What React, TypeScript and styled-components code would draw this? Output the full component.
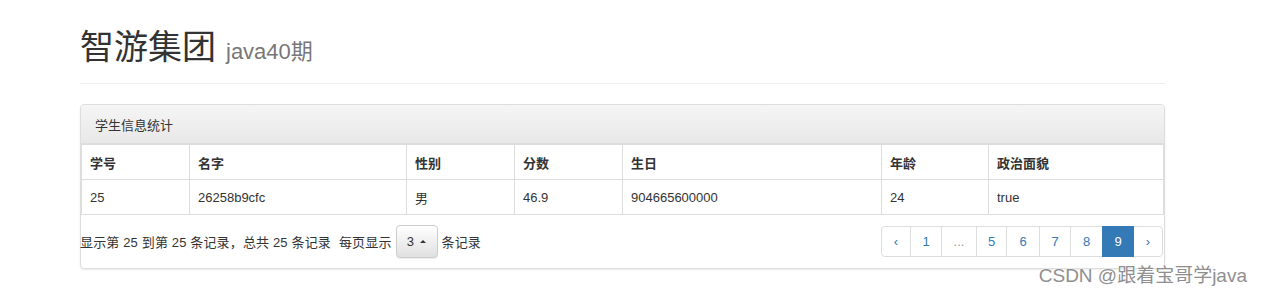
import React from 'react';
import styled, { createGlobalStyle } from 'styled-components';

const GlobalStyles = createGlobalStyle`
  html, body {
    margin: 0;
    padding: 0;
    background: #ffffff;
  }
  body {
    font-family: "Liberation Sans", "Noto Sans CJK SC", sans-serif;
    color: #333333;
    font-size: 13px;
  }
`;

const Page = styled.div`
  position: relative;
  width: 1261px;
  height: 293px;
  padding: 0 0 0 80px;
  box-sizing: border-box;
`;

const Header = styled.div`
  width: 1085px;
  padding-top: 27px;
  padding-bottom: 11px;
  border-bottom: 1px solid #eeeeee;
  margin-bottom: 20px;
`;

const Title = styled.h1`
  margin: 0;
  font-size: 34px;
  line-height: 40px;
  font-weight: 400;
  color: #333333;
`;

const SubTitle = styled.small`
  font-size: 22px;
  color: #777777;
  margin-left: 10px;
`;

const Panel = styled.div`
  width: 1085px;
  box-sizing: border-box;
  border: 1px solid #dddddd;
  border-radius: 4px;
  box-shadow: 0 1px 2px rgba(0, 0, 0, 0.08);
  background: #ffffff;
`;

const PanelHeading = styled.div`
  height: 39px;
  box-sizing: border-box;
  padding: 0 14px;
  display: flex;
  align-items: center;
  font-size: 13px;
  color: #333333;
  background: linear-gradient(to bottom, #f5f5f5 0%, #e8e8e8 100%);
  border-bottom: 1px solid #dddddd;
  border-radius: 3px 3px 0 0;
`;

const Table = styled.table`
  width: 1082px;
  border-collapse: collapse;
  table-layout: fixed;
  border: 1px solid #dddddd;
  border-top: 0;
`;

const Cell = styled.td<{ $head?: boolean }>`
  height: 34px;
  padding: 0 8px;
  border: 1px solid #dddddd;
  font-size: 13px;
  font-weight: ${p => (p.$head ? 700 : 400)};
  color: #333333;
  vertical-align: middle;
  text-align: left;
`;

const Footer = styled.div`
  display: flex;
  align-items: center;
  justify-content: space-between;
  padding: 10px 0 10px 0;
  margin-left: -1px;
`;

const Detail = styled.div`
  display: flex;
  align-items: center;
  font-size: 13px;
  letter-spacing: 0.15px;
  color: #333333;
  white-space: pre;
`;

const PerPage = styled.span`
  margin-left: 8px;
`;

const SizeButton = styled.button`
  width: 42px;
  height: 33px;
  margin: 0 4px 0 4px;
  border: 1px solid #cccccc;
  border-radius: 4px;
  background: linear-gradient(to bottom, #ffffff 0%, #e0e0e0 100%);
  box-shadow: inset 0 1px 0 rgba(255, 255, 255, 0.15), 0 1px 1px rgba(0, 0, 0, 0.075);
  font-family: inherit;
  font-size: 13px;
  color: #333333;
  display: flex;
  align-items: center;
  justify-content: center;
  gap: 3px;
  padding: 0;
`;

const Caret = styled.span`
  width: 0;
  height: 0;
  border-left: 3px solid transparent;
  border-right: 3px solid transparent;
  border-bottom: 3px solid #333333;
`;

const Pagination = styled.ul`
  display: flex;
  list-style: none;
  margin: 0 1px 0 0;
  padding: 0;
  border-radius: 4px;
`;

const PageItem = styled.li<{ $active?: boolean; $w: number; $muted?: boolean }>`
  width: ${p => p.$w}px;
  height: 31px;
  box-sizing: border-box;
  display: flex;
  align-items: center;
  justify-content: center;
  margin-left: -1px;
  border: 1px solid ${p => (p.$active ? '#337ab7' : '#dddddd')};
  background: ${p => (p.$active ? '#337ab7' : '#ffffff')};
  color: ${p => (p.$active ? '#ffffff' : p.$muted ? '#999999' : '#337ab7')};
  font-size: 13px;
  position: relative;
  z-index: ${p => (p.$active ? 2 : 1)};
  &:first-child {
    margin-left: 0;
    border-radius: 4px 0 0 4px;
  }
  &:last-child {
    border-radius: 0 4px 4px 0;
  }
`;

const Watermark = styled.div`
  position: absolute;
  right: 14px;
  top: 260px;
  font-size: 19px;
  color: #8f8f8f;
  text-shadow: 0 0 2px #ffffff, 0 0 2px #ffffff;
`;

const columns = [
  { title: '学号', width: 108, value: '25' },
  { title: '名字', width: 217, value: '26258b9cfc' },
  { title: '性别', width: 108, value: '男' },
  { title: '分数', width: 108, value: '46.9' },
  { title: '生日', width: 259, value: '904665600000' },
  { title: '年龄', width: 107, value: '24' },
  { title: '政治面貌', width: 175, value: 'true' },
];

const pages = [
  { label: '‹', w: 30 },
  { label: '1', w: 32 },
  { label: '...', w: 36, muted: true },
  { label: '5', w: 31 },
  { label: '6', w: 34 },
  { label: '7', w: 32 },
  { label: '8', w: 33 },
  { label: '9', w: 32, active: true },
  { label: '›', w: 30 },
];

const App = () => {
  return (
    <React.Fragment>
      <GlobalStyles />
      <Page>
        <Header>
          <Title>
            智游集团<SubTitle>java40期</SubTitle>
          </Title>
        </Header>
        <Panel>
          <PanelHeading>学生信息统计</PanelHeading>
          <Table>
            <colgroup>
              {columns.map(c => (
                <col key={c.title} style={{ width: c.width }} />
              ))}
            </colgroup>
            <thead>
              <tr>
                {columns.map(c => (
                  <Cell as="th" $head key={c.title}>
                    {c.title}
                  </Cell>
                ))}
              </tr>
            </thead>
            <tbody>
              <tr>
                {columns.map(c => (
                  <Cell key={c.title}>{c.value}</Cell>
                ))}
              </tr>
            </tbody>
          </Table>
          <Footer>
            <Detail>
              显示第 25 到第 25 条记录，总共 25 条记录
              <PerPage>每页显示</PerPage>
              <SizeButton>
                3 <Caret />
              </SizeButton>
              条记录
            </Detail>
            <Pagination>
              {pages.map((p, i) => (
                <PageItem key={i} $w={p.w} $active={p.active} $muted={p.muted}>
                  {p.label}
                </PageItem>
              ))}
            </Pagination>
          </Footer>
        </Panel>
        <Watermark>CSDN @跟着宝哥学java</Watermark>
      </Page>
    </React.Fragment>
  );
};

export default App;
